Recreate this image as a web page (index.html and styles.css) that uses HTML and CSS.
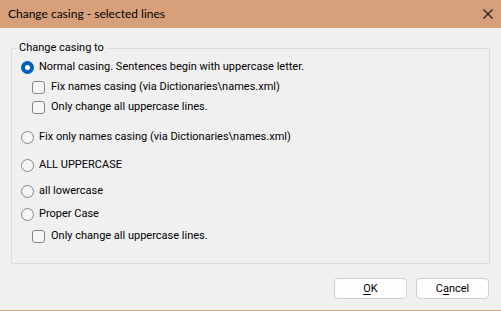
FILE: index.html
```html
<!DOCTYPE html>
<html>
<head>
<meta name="viewport" content="width=device-width, initial-scale=1">
<link rel="stylesheet" href="styles.css">
</head>
<body>

<div class="window">
  <div class="titlebar">
    <span class="title">Change casing - selected lines</span>
    <svg class="close" width="10" height="10" viewBox="0 0 10 10">
      <path d="M0.5 0.5 L9.5 9.5 M9.5 0.5 L0.5 9.5" stroke="#1a1a1a" stroke-width="1.1" fill="none"/>
    </svg>
  </div>

  <div class="content">
    <fieldset class="group">
      <legend>Change casing to</legend>

      <div class="row r1"><span class="radio checked"></span>Normal casing. Sentences begin with uppercase letter.</div>
      <div class="row sub r2"><span class="check"></span>Fix names casing (via Dictionaries\names.xml)</div>
      <div class="row sub r3"><span class="check"></span>Only change all uppercase lines.</div>
      <div class="row r4"><span class="radio"></span>Fix only names casing (via Dictionaries\names.xml)</div>
      <div class="row r5"><span class="radio"></span>ALL UPPERCASE</div>
      <div class="row r6"><span class="radio"></span>all lowercase</div>
      <div class="row r7"><span class="radio"></span>Proper Case</div>
      <div class="row sub r8"><span class="check"></span>Only change all uppercase lines.</div>
    </fieldset>

    <div class="buttons">
      <button class="btn"><u>O</u>K</button>
      <button class="btn">C<u>a</u>ncel</button>
    </div>
  </div>
</div>

</body>
</html>
```

FILE: styles.css
```css
body {
    margin: 0;
    font-family: Roboto, "Noto Sans", sans-serif;
    font-size: 11px;
    color: #000;
}

.window {
    width: 501px;
    height: 311px;
    box-sizing: border-box;
    background-color: #f0f0f0;
    border-bottom: 1px solid #d8a07a;
}

/* Title bar */
.titlebar {
    height: 28px;
    background-color: #d8a07a;
    display: flex;
    align-items: center;
    padding: 0 8px;
}

.title {
    flex: 1;
    font-family: Lato, "Noto Sans", sans-serif;
    font-size: 12px;
    line-height: 16px;
}

.content {
    padding: 12px 11px 0 11px;
}

/* Group box */
.group {
    margin: 0;
    padding: 0 0 19px 0;
    border: 1px solid #dcdcdc;
    height: 224px;
    box-sizing: border-box;
}

.group legend {
    margin-left: 5px;
    padding: 0 2px;
    line-height: 16px;
}

.row {
    display: flex;
    align-items: center;
    height: 16px;
    line-height: 16px;
    padding-left: 9px;
}

.row.sub { padding-left: 20px; }

.r1 { margin-top: 3px; }
.r2 { margin-top: 4px; }
.r3 { margin-top: 4px; }
.r4 { margin-top: 14px; }
.r5 { margin-top: 12px; }
.r6 { margin-top: 10px; }
.r7 { margin-top: 7px; }
.r8 { margin-top: 6px; }

/* Radio buttons */
.radio {
    width: 13px;
    height: 13px;
    box-sizing: border-box;
    border: 1px solid #858585;
    border-radius: 50%;
    background-color: #f5f5f5;
    margin-right: 5px;
    flex: none;
}

.radio.checked {
    border: 4px solid #005fb8;
    background-color: #fff;
}

/* Check boxes */
.check {
    width: 13px;
    height: 13px;
    box-sizing: border-box;
    border: 1px solid #858585;
    border-radius: 3px;
    background-color: #f7f7f7;
    margin-right: 6px;
    flex: none;
}

/* Buttons */
.buttons {
    display: flex;
    justify-content: flex-end;
    gap: 9px;
    margin-top: 14px;
    padding-right: 1px;
}

.btn {
    width: 73px;
    height: 21px;
    padding: 0;
    font-family: inherit;
    font-size: 11px;
    background-color: #fdfdfd;
    border: 1px solid #d0d0d0;
    border-radius: 4px;
    color: #000;
}

.btn u {
    text-decoration-thickness: 1px;
    text-underline-offset: 2px;
}
```
